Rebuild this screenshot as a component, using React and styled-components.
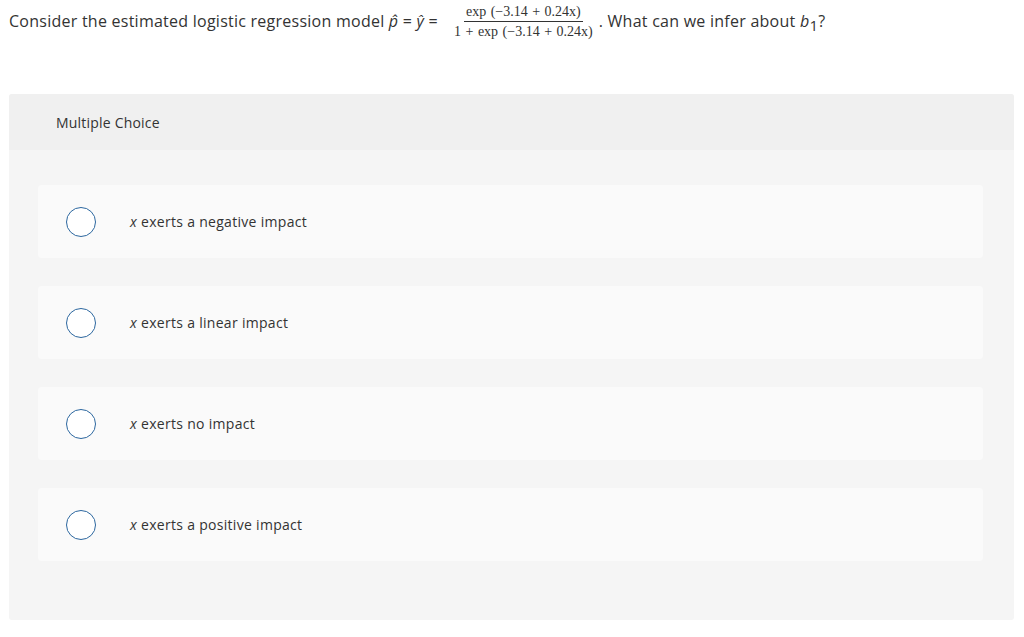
import React from 'react';
import styled, { createGlobalStyle } from 'styled-components';

const GlobalStyle = createGlobalStyle`
  body {
    margin: 0;
    background: #ffffff;
    font-family: "Open Sans", Lato, Arial, sans-serif;
    color: #333333;
  }
`;

const Page = styled.div`
  padding: 1px 10px 0 9px;
`;

const Question = styled.div`
  display: flex;
  align-items: center;
  font-size: 16px;
  letter-spacing: 0.25px;
  color: #333;
  height: 40px;
  white-space: nowrap;
`;

const Fraction = styled.span`
  display: inline-flex;
  flex-direction: column;
  align-items: center;
  font-family: "Liberation Serif", "Times New Roman", serif;
  font-size: 14px;
  letter-spacing: 0;
  word-spacing: 1px;
  margin: 0 4px 0 14px;
  line-height: 15px;

  .num {
    padding: 0 2px 2px;
    border-bottom: 1px solid #333;
  }
  .den {
    padding: 2px 2px 0;
  }
`;

const Var = styled.i`
  font-style: italic;
`;

const Sub = styled.span`
  position: relative;
  top: 4px;
  font-size: 15px;
`;

const Panel = styled.section`
  margin-top: 53px;
  width: 1005px;
  height: 526px;
  background: #f5f5f5;
  border-radius: 3px;
  overflow: hidden;
`;

const PanelHeader = styled.div`
  height: 56px;
  background: #f0f0f0;
  display: flex;
  align-items: center;
  padding-left: 47px;
  font-size: 14px;
  letter-spacing: 0.2px;
  color: #333;
`;

const OptionList = styled.div`
  display: flex;
  flex-direction: column;
  gap: 28px;
  padding: 35px 31px 0 29px;
`;

const Option = styled.label`
  display: flex;
  align-items: center;
  height: 73px;
  background: #fafafa;
  border-radius: 4px;
  font-size: 14px;
  letter-spacing: 0.3px;
  color: #333;
`;

const Radio = styled.span`
  width: 28px;
  height: 28px;
  border: 1.5px solid #2c679f;
  border-radius: 50%;
  margin-left: 28px;
  margin-right: 34px;
  background: #fff;
  flex-shrink: 0;
`;

const options = [
  'exerts a negative impact',
  'exerts a linear impact',
  'exerts no impact',
  'exerts a positive impact',
];

export default function App() {
  return (
    <Page>
      <GlobalStyle />
      <Question>
        Consider the estimated logistic regression model&nbsp;
        <Var>p̂</Var>&nbsp;=&nbsp;<Var>ŷ</Var>&nbsp;=
        <Fraction>
          <span className="num">exp (−3.14 + 0.24x)</span>
          <span className="den">1 + exp (−3.14 + 0.24x)</span>
        </Fraction>
        . What can we infer about&nbsp;<Var>b</Var>
        <Sub>1</Sub>?
      </Question>
      <Panel>
        <PanelHeader>Multiple Choice</PanelHeader>
        <OptionList>
          {options.map((text) => (
            <Option key={text}>
              <Radio />
              <span>
                <Var>x</Var> {text}
              </span>
            </Option>
          ))}
        </OptionList>
      </Panel>
    </Page>
  );
}
